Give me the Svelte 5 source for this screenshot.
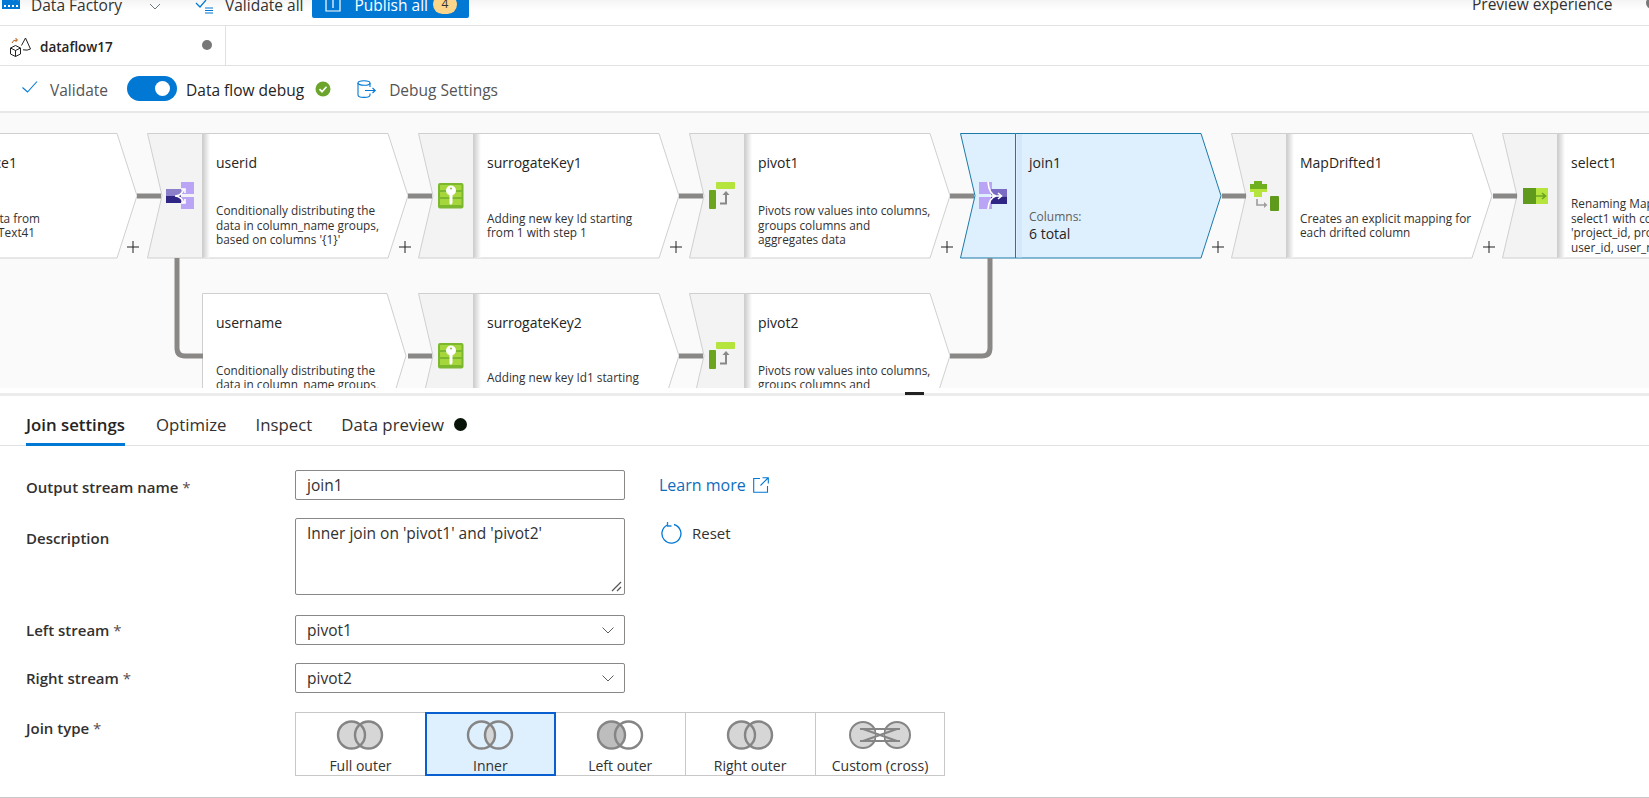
<script>
  const row1 = [
    { x: -124, title: 'mysource1', desc: ['Import data from', 'DelimitedText41'], icon: null },
    { x: 147, title: 'userid', desc: ['Conditionally distributing the', 'data in column_name groups,', "based on columns '{1}'"], icon: 'split' },
    { x: 418, title: 'surrogateKey1', desc: ['Adding new key Id starting', 'from 1 with step 1'], icon: 'key' },
    { x: 689, title: 'pivot1', desc: ['Pivots row values into columns,', 'groups columns and', 'aggregates data'], icon: 'pivot' },
    { x: 960, title: 'join1', selected: true, icon: 'join' },
    { x: 1231, title: 'MapDrifted1', desc: ['Creates an explicit mapping for', 'each drifted column'], icon: 'map' },
    { x: 1502, title: 'select1', desc: ['Renaming MapDrifted1 to', 'select1 with columns', "'project_id, project_name,", "user_id, user_name'"], icon: 'select' }
  ];
  const row2 = [
    { x: 147, title: 'username', bodyOnly: true, desc: ['Conditionally distributing the', 'data in column_name groups,', "based on columns '{2}'"] },
    { x: 418, title: 'surrogateKey2', desc: ['Adding new key Id1 starting', '\u00a0'], icon: 'key' },
    { x: 689, title: 'pivot2', desc: ['Pivots row values into columns,', 'groups columns and', 'aggregates data'], icon: 'pivot' }
  ];
  const nodes = [
    ...row1.map((n) => ({ ...n, y: 20 })),
    ...row2.map((n) => ({ ...n, y: 179.5 }))
  ];
  const links = [
    [137, 83], [408, 83], [679, 83], [950, 83], [1222, 83], [1493, 83],
    [408, 243], [679, 243]
  ];
  const pluses = [133, 405, 676, 947, 1218, 1489];
  const joinTypes = [
    { name: 'Full outer', kind: 'full' },
    { name: 'Inner', kind: 'inner', active: true },
    { name: 'Left outer', kind: 'left' },
    { name: 'Right outer', kind: 'right' },
    { name: 'Custom (cross)', kind: 'cross' }
  ];
</script>

<div class="page">
  <header class="top">
    <svg class="factory" viewBox="0 0 20 20" width="20" height="20"><path d="M1 0h18v12H1z" fill="#0078d4"/><path d="M3 10V8h2v2zM7 10V8h2v2zM11 10V8h2v2zM15 10V8h2v2z" fill="#fff"/><path d="M9 0l4 4V0l5 4V0z" fill="#fff" opacity=".35"/></svg>
    <span class="t-factory">Data Factory</span>
    <svg class="chev c1" viewBox="0 0 12 7" width="12" height="7"><path d="M1 1l5 5 5-5" fill="none" stroke="#69797e" stroke-width="1"/></svg>
    <svg class="val-all" viewBox="0 0 18 14" width="18" height="14"><path d="M1 3l4 4 6-7" fill="none" stroke="#0078d4" stroke-width="1.2"/><path d="M10 8h8M10 10.5h8M10 13h8" stroke="#0078d4" stroke-width="1.2"/></svg>
    <span class="t-val">Validate all</span>
    <div class="publish">
      <svg viewBox="0 0 16 16" width="16" height="16"><path d="M1 0v14h14V0M8 3v8" fill="none" stroke="#fff" stroke-width="1.2"/></svg>
      <span>Publish all</span>
      <b>4</b>
    </div>
    <span class="preview">Preview experience</span>
    <span class="avatar"></span>
  </header>

  <div class="tabs">
    <div class="tab">
      <svg viewBox="0 0 22 20" width="22" height="20">
        <g fill="none" stroke="#222" stroke-width="1">
          <path d="M1.500 11l5-2.500 5 2.500v6l-5 2.500-5-2.500zM1.500 11l5 2.500 5-2.500M6.500 13.500v6"/>
          <path d="M16.500 1l5 11q-3 1.800-7.500.8"/>
          <path d="M12.500 8.500L16.500 1"/>
          <path d="M3 6q1-3.500 5-3M6.500 1l2 2-2 2" stroke="#b4570f"/>
        </g>
      </svg>
      <span class="tab-name">dataflow17</span>
      <i class="unsaved"></i>
    </div>
  </div>

  <div class="toolbar">
    <svg class="check" viewBox="0 0 16 12" width="16" height="12"><path d="M.5 6.500L5.500 11 15 .5" fill="none" stroke="#0078d4" stroke-width="1.1"/></svg>
    <span class="muted v">Validate</span>
    <span class="toggle"><i></i></span>
    <span class="dbg">Data flow debug</span>
    <svg class="ok" viewBox="0 0 16 16" width="16" height="16"><circle cx="8" cy="8" r="7.500" fill="#6ba52b"/><path d="M4.500 8.200L7 10.700l4.500-5" fill="none" stroke="#fff" stroke-width="1.700"/></svg>
    <svg class="db" viewBox="0 0 20 18" width="20" height="18"><g fill="none" stroke="#0078d4" stroke-width="1.100"><ellipse cx="7" cy="3" rx="6" ry="2.300"/><path d="M1 3v12q0 2.400 6 2.400t6-2.400v-1.500M13 3v4M8 10.500h10M15.500 8l2.700 2.500-2.700 2.500"/></g></svg>
    <span class="muted s">Debug Settings</span>
  </div>

  <div class="canvas">
    <svg class="wires" width="1649" height="275" viewBox="0 0 1649 275">
      <g fill="none" stroke="#8a8886" stroke-width="5">
        {#each links as [x, y]}
          <path d="M{x} {y}h24"/>
        {/each}
        <path d="M177 145v90q0 8 8 8h18"/>
        <path d="M950 243h32q8 0 8-8v-90"/>
      </g>
    </svg>

    {#each nodes as n}
      <div class="node" class:sel={n.selected} style="left:{n.x}px;top:{n.y}px">
        <svg class="shape" width="263" height="127" viewBox="0 0 263 127">
          <defs>
            <linearGradient id="edge" x1="0" x2="1" y1="0" y2="0"><stop offset="0" stop-color="#cfcfcf"/><stop offset="1" stop-color="#fff"/></linearGradient>
          </defs>
          {#if !n.bodyOnly}
            <path class="ic" d="M.5.500H55.500V125H.5L15 62.700z"/>
          {/if}
          {#if n.bodyOnly}
            <path class="bd" d="M55.500.500H240L259 62.700 240 125H55.500z"/>
          {:else}
            <path class="bd" d="M55.500.500H241L261 62.700 241 125H55.500z"/>
            {#if !n.selected}<rect x="56" y="1" width="7" height="123.500" fill="url(#edge)"/>{:else}<rect x="57" y="1" width="5" height="123.500" fill="#cfe5f8" opacity=".7"/>{/if}
          {/if}
        </svg>

        {#if n.icon}
          <svg class="icon" width="30" height="30" viewBox="0 0 30 30">
            {#if n.icon === 'split'}
              <rect x="1" y="8" width="15" height="7" fill="#8a7fc8"/>
              <rect x="1" y="15" width="15" height="7" fill="#2e2585"/>
              <rect x="16" y="1" width="13" height="12" fill="#b9a4f5"/>
              <rect x="16" y="16" width="13" height="12" fill="#b9a4f5"/>
              <path d="M10 15q6 0 9-7m-3 0h4v4M10 15q6 0 9 7m-3 0h4v-4" fill="none" stroke="#fff" stroke-width="1.600"/>
            {:else if n.icon === 'join'}
              <rect x="1" y="1" width="13" height="12" fill="#b9a4f5"/>
              <rect x="1" y="16" width="13" height="12" fill="#b9a4f5"/>
              <rect x="13" y="8" width="16" height="7.500" fill="#7a6cc4"/>
              <rect x="13" y="15.500" width="16" height="7.500" fill="#2e2585"/>
              <path d="M10 1q1 12 8 14-7 2-8 13M12 15h11m-3-3l3.500 3-3.500 3" fill="none" stroke="#fff" stroke-width="1.600"/>
            {:else if n.icon === 'key'}
              <rect x="2" y="2" width="25.500" height="25.500" rx="2" fill="#7cb82f"/>
              <rect x="4" y="4" width="21.500" height="5" fill="#a5d63c"/>
              <rect x="4" y="11" width="21.500" height="5" fill="#a5d63c"/>
              <rect x="4" y="18" width="21.500" height="6" fill="#a5d63c"/>
              <path d="M13.500 13h3v9l-1.500 2-1.500-1.500z" fill="#fff"/>
              <circle cx="15" cy="9.500" r="5" fill="#fff"/>
              <circle cx="15" cy="7.500" r="1" fill="#8cc530"/>
            {:else if n.icon === 'pivot'}
              <rect x="2" y="9" width="7" height="19" rx="1" fill="#6ba51f"/>
              <rect x="9" y="1" width="19" height="7" rx="1" fill="#b5e53c"/>
              <path d="M13 22.500h6V13" fill="none" stroke="#8a8886" stroke-width="2"/>
              <path d="M15.500 14l3.500-4 3.500 4z" fill="#8a8886"/>
            {:else if n.icon === 'map'}
              <path d="M5 0h8v6h5v5h-5v5H5v-5H1V6h4z" fill="#b5e53c"/>
              <path d="M5 0h8v3h5v5H1V3h4z" fill="#6fb020"/>
              <path d="M8 18v6h9" fill="none" stroke="#a19f9d" stroke-width="1.700"/>
              <path d="M15 21l3.500 3-3.500 3z" fill="#a19f9d"/>
              <rect x="21" y="15" width="9" height="15" rx="1" fill="#5f9a1c"/>
            {:else}
              <rect x="3" y="7" width="13" height="16" fill="#5f9a1c"/>
              <rect x="16" y="7" width="12" height="16" fill="#b5e53c"/>
              <path d="M16 15h9m-3-3l3.500 3-3.500 3" fill="none" stroke="#6ba51f" stroke-width="1.600"/>
            {/if}
          </svg>
        {/if}

        <div class="text" class:noic={n.bodyOnly}>
          <div class="title">{n.title}</div>
          <div class="desc">
            {#if n.selected}
              <span class="cols">Columns:</span>
              <span class="total">6 total</span>
            {:else}
              {#each n.desc as line}
                <span>{line}</span>
              {/each}
            {/if}
          </div>
        </div>
      </div>
    {/each}

    {#each pluses as x}
      <svg class="plus" style="left:{x - 6}px" width="12" height="12" viewBox="0 0 12 12"><path d="M6 0v12M0 6h12" stroke="#222" stroke-width="1"/></svg>
    {/each}
  </div>

  <div class="splitter"><i></i></div>

  <section class="panel">
    <nav class="ptabs">
      <span class="ptab on">Join settings</span>
      <span class="ptab">Optimize</span>
      <span class="ptab">Inspect</span>
      <span class="ptab">Data preview</span>
      <i class="pdot"></i>
    </nav>

    <div class="form">
      <div class="fields">
        <label class="row r1"><span class="lab">Output stream name <em>*</em></span><span class="inp">join1</span></label>
        <label class="row r2"><span class="lab">Description</span>
          <span class="inp area">Inner join on 'pivot1' and 'pivot2'
            <svg class="grip" width="11" height="11" viewBox="0 0 11 11"><path d="M10 1L1 10M10 6l-4 4" stroke="#555" stroke-width="1.200"/></svg>
          </span>
        </label>
        <label class="row r3"><span class="lab">Left stream <em>*</em></span><span class="inp sel-i">pivot1<svg viewBox="0 0 12 7" width="12" height="7"><path d="M.5.500L6 6 11.500.500" fill="none" stroke="#605e5c" stroke-width="1"/></svg></span></label>
        <label class="row r4"><span class="lab">Right stream <em>*</em></span><span class="inp sel-i">pivot2<svg viewBox="0 0 12 7" width="12" height="7"><path d="M.5.500L6 6 11.500.500" fill="none" stroke="#605e5c" stroke-width="1"/></svg></span></label>
        <div class="row r5">
          <span class="lab">Join type <em>*</em></span>
          <div class="jtypes">
            {#each joinTypes as j}
              <div class="jt" class:active={j.active}>
                <svg width="62" height="30" viewBox="0 0 62 30">
                  {#if j.kind === 'cross'}
                    <circle cx="14" cy="15" r="13" fill="#d6d6d6" stroke="#858585" stroke-width="2"/>
                    <circle cx="48" cy="15" r="13" fill="#d6d6d6" stroke="#858585" stroke-width="2"/>
                    <rect x="27" y="9" width="8" height="12" fill="#fff"/>
                    <path d="M11 9h40M11 21h40M14 9l34 12M14 21L48 9" stroke="#858585" stroke-width="2"/>
                  {:else}
                    <circle cx="22.500" cy="15" r="13.500" fill={j.kind === 'left' ? '#bdbdbd' : j.kind === 'inner' ? 'none' : '#d6d6d6'}/>
                    <circle cx="39.500" cy="15" r="13.500" fill={j.kind === 'right' || j.kind === 'full' ? '#d6d6d6' : 'none'}/>
                    {#if j.kind === 'inner'}
                      <path d="M31 4.500a13.500 13.500 0 0 1 0 21a13.500 13.500 0 0 1 0-21z" fill="#d6d6d6"/>
                    {/if}
                    <circle cx="22.500" cy="15" r="13.500" fill="none" stroke="#858585" stroke-width="2.400"/>
                    <circle cx="39.500" cy="15" r="13.500" fill="none" stroke="#858585" stroke-width="2.400"/>
                  {/if}
                </svg>
                <span>{j.name}</span>
              </div>
            {/each}
          </div>
        </div>
      </div>

      <div class="side">
        <a class="learn" href="#top">Learn more
          <svg viewBox="0 0 16 16" width="16" height="16"><path d="M7 1.500H.7v13.800h13.800V9M9.500.7h5.800v5.800M15 1L7.500 8.500" fill="none" stroke="#0078d4" stroke-width="1.100"/></svg>
        </a>
        <div class="reset">
          <svg viewBox="0 0 22 22" width="22" height="22"><path d="M7.500 3A9.500 9.500 0 1 0 14 2.500" fill="none" stroke="#0078d4" stroke-width="1.300"/><path d="M7.500 0v4h4" fill="none" stroke="#0078d4" stroke-width="1.300" opacity=".9"/></svg>
          <span>Reset</span>
        </div>
      </div>
    </div>
  </section>
</div>

<style>
  :global(body) { margin: 0; background: #fff; }
  .page {
    width: 1649px; height: 798px; overflow: hidden; position: relative;
    font-family: "Open Sans", "Noto Sans", sans-serif; color: #252423;
    border-bottom: 1px solid #c8c8c8; box-sizing: border-box;
  }
  .top {
    height: 26px; box-sizing: border-box; border-bottom: 1px solid #e1e1e1;
    display: flex; align-items: flex-end; overflow: hidden; font-size: 15.500px; color: #323130;
    background: linear-gradient(#f4f4f4, #fff 10px);
  }
  .factory { margin: 0 0 8px 1px; flex: none; }
  .t-factory { margin: 0 0 10px 10px; line-height: 20px; font-size: 15.500px; }
  .chev.c1 { margin: 0 0 15px 27px; flex: none; }
  .val-all { margin: 0 0 11px 34px; flex: none; }
  .t-val { margin: 0 0 10px 12px; line-height: 20px; }
  .publish {
    margin: 0 0 7px 9px; width: 157px; height: 30px; flex: none; background: #0078d4; color: #fff;
    border-radius: 2px; display: flex; align-items: flex-end; padding: 0 0 3px 13px; box-sizing: border-box;
  }
  .publish svg { margin-bottom: 2px; }
  .publish span { margin-left: 13px; line-height: 20px; }
  .publish b {
    margin: 0 0 1px 5px; width: 24px; height: 19px; border-radius: 10px; background: #fbd68a; color: #323130;
    font-weight: 400; font-size: 12px; text-align: center; line-height: 17px;
  }
  .preview { position: absolute; left: 1472px; top: -6px; line-height: 20px; }
  .avatar { position: absolute; left: 1646px; top: -3px; width: 12px; height: 12px; border-radius: 50%; background: #777; }

  .tabs { height: 40px; box-sizing: border-box; border-bottom: 1px solid #e1e1e1; }
  .tab {
    width: 226px; height: 39px; background: #fff; border-right: 1px solid #e1e1e1;
    display: flex; align-items: center; padding-left: 9px; box-sizing: border-box; position: relative;
  }
  .tab svg { margin-top: 2px; }
  .tab-name { margin-left: 9px; font-size: 13.500px; font-weight: 600; color: #252423; margin-top: 2px; }
  .unsaved { position: absolute; left: 202px; top: 14px; width: 10px; height: 10px; border-radius: 50%; background: #777; }

  .toolbar {
    height: 47px; box-sizing: border-box; border-bottom: 2px solid #e8e8e8; display: flex; align-items: center; font-size: 15.500px; padding-top: 1px;
  }
  .check { margin-left: 22px; margin-top: -4px; }
  .muted { color: #555; }
  .v { margin-left: 12px; margin-top: 2px; }
  .toggle { margin-left: 19px; width: 50px; height: 25px; border-radius: 13px; background: #0078d4; position: relative; margin-top: -1px; }
  .toggle i { position: absolute; right: 7px; top: 5px; width: 15px; height: 15px; border-radius: 50%; background: #fff; }
  .dbg { margin-left: 9px; color: #252423; margin-top: 2px; }
  .ok { margin-left: 11px; }
  .db { margin-left: 26px; }
  .s { margin-left: 12px; margin-top: 2px; }

  .canvas { height: 275px; background: #fafafa; position: relative; overflow: hidden; }
  .wires { position: absolute; left: 0; top: 0; z-index: 2; }
  .node { position: absolute; width: 263px; height: 127px; }
  .shape { position: absolute; left: 0; top: 0; }
  .ic { fill: #f3f3f3; stroke: #cfcfcf; stroke-width: 1; }
  .bd { fill: #fff; stroke: #cfcfcf; stroke-width: 1; }
  .sel .ic, .sel .bd { fill: #deeffe; stroke: #1a7aa8; }
  .icon { position: absolute; left: 18px; top: 48px; z-index: 3; }
  .text {
    position: absolute; left: 69px; top: 0; width: 190px; height: 125px;
    display: flex; flex-direction: column; white-space: nowrap;
  }
  .title { height: 61px; line-height: 59px; font-size: 14px; font-weight: 500; color: #252423; }
  .desc {
    height: 62px; display: flex; flex-direction: column; justify-content: center;
    font-size: 11.800px; line-height: 14.500px; color: #323130;
  }
  .desc span { display: block; }
  .desc .cols { color: #605e5c; font-size: 12px; line-height: 17px; }
  .desc .total { font-size: 14px; line-height: 18px; color: #252423; font-weight: 500; }
  .plus { position: absolute; top: 128px; z-index: 3; }

  .splitter { height: 8px; background: #fff; position: relative; box-sizing: border-box; border-top: 5px solid #fff; border-bottom: 3px solid #ececec; }
  .splitter i { position: absolute; left: 905px; top: -1px; width: 19px; height: 3px; background: #222; }

  .panel { background: #fff; }
  .ptabs {
    height: 50px; box-sizing: border-box; border-bottom: 1px solid #e1e1e1; display: flex; font-size: 16.800px; padding-left: 26px; position: relative;
    color: #323130;
  }
  .ptab { margin-right: 29px; padding-top: 9px; line-height: 40px; height: 50px; box-sizing: border-box; white-space: nowrap; }
  .ptab.on { border-bottom: 3px solid #0078d4; font-weight: 600; font-size: 16.800px; color: #252423; margin-right: 31px; }
  .pdot { position: absolute; left: 454px; top: 22px; width: 13px; height: 13px; border-radius: 50%; background: #071407; }

  .form { display: flex; }
  .fields { width: 660px; padding: 24px 0 0 26px; box-sizing: border-box; }
  .row { display: flex; font-size: 15px; }
  .lab { width: 269px; flex: none; font-weight: 600; color: #323130; line-height: 20px; }
  .lab em { color: #5c4a4a; font-style: normal; font-weight: 400; }
  .inp {
    width: 330px; height: 30px; box-sizing: border-box; border: 1px solid #8a8886; border-radius: 2px;
    padding: 0 10px 0 11px; font-size: 15.500px; line-height: 24px; color: #323130; position: relative; display: flex; justify-content: space-between; align-items: center;
  }
  .area { height: 77px; align-items: flex-start; padding-top: 2px; }
  .grip { position: absolute; right: 2px; bottom: 2px; }
  .r1 { height: 48px; } .r1 .lab { padding-top: 7px; }
  .r2 { height: 97px; } .r2 .lab { padding-top: 10px; }
  .r3 { height: 48px; } .r3 .lab { padding-top: 5px; }
  .r4 { height: 49px; } .r4 .lab { padding-top: 5px; }
  .jtypes { display: flex; }
  .jt {
    width: 130.900px; height: 64px; box-sizing: border-box; border: 1px solid #c8c8c8; margin-right: -1px;
    display: flex; flex-direction: column; align-items: center; font-size: 14px; color: #323130; padding-top: 7px; background: #fff; position: relative;
  }
  .jt svg { flex: none; }
  .jt span { line-height: 18px; margin-top: 7px; white-space: nowrap; }
  .jt.active { background: #deeffe; border: 2px solid #0a5fd0; z-index: 2; padding-top: 6px; }
  .r5 .lab { padding-top: 6px; }

  .side { position: relative; padding: 24px 0 0 0; }
  .learn { display: flex; align-items: center; gap: 7px; color: #0f6cbd; text-decoration: none; font-size: 16px; height: 30px; margin-left: -1px; }
  .reset { display: flex; align-items: center; gap: 10px; margin-top: 22px; font-size: 15px; color: #323130; }
</style>
